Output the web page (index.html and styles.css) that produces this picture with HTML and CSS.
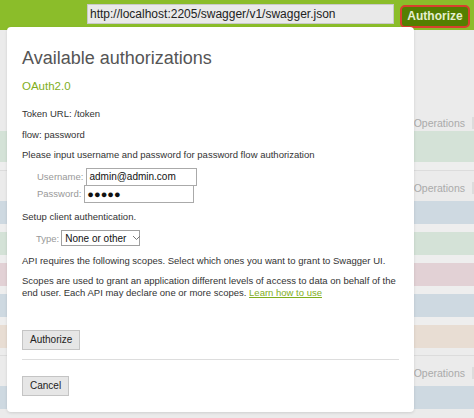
FILE: index.html
```html
<!DOCTYPE html>
<html>
<head>
<meta charset="utf-8">
<link rel="stylesheet" href="styles.css">
</head>
<body>
<div class="page">
  <header class="topbar">
    <div class="url">http://localhost:2205/swagger/v1/swagger.json</div>
    <div class="auth-top">Authorize</div>
  </header>
  <div class="bg">
    <div class="space s1"></div>
    <div class="oprow"><span class="ops">Operations</span><span class="opbox"></span></div>
    <div class="strip green h31"></div>
    <div class="space s2"></div>
    <div class="oprow tall"><span class="ops">Operations</span><span class="opbox"></span></div>
    <div class="strip blue"></div>
    <div class="gap"></div>
    <div class="strip green"></div>
    <div class="gap"></div>
    <div class="strip red"></div>
    <div class="gap"></div>
    <div class="strip blue"></div>
    <div class="gap"></div>
    <div class="strip tan"></div>
    <div class="space s3"></div>
    <div class="oprow tall"><span class="ops">Operations</span><span class="opbox"></span></div>
    <div class="strip blue"></div>
  </div>

  <div class="modal">
    <h1 class="title">Available authorizations</h1>
    <div class="scheme">OAuth2.0</div>
    <p class="line token">Token URL: /token</p>
    <p class="line flow">flow: password</p>
    <p class="line please">Please input username and password for password flow authorization</p>
    <div class="field first"><span class="lbl">Username:</span><span class="inp w111">admin@admin.com</span></div>
    <div class="field"><span class="lbl">Password:</span><span class="inp w110 dots">●●●●●</span></div>
    <p class="line setup">Setup client authentication.</p>
    <div class="field typerow"><span class="lbl">Type:</span><span class="sel"><span class="seltext">None or other</span><svg class="chev" width="9" height="6" viewBox="0 0 9 6"><path d="M1 1 L4.5 4.5 L8 1" fill="none" stroke="#777" stroke-width="1"/></svg></span></div>
    <p class="line api">API requires the following scopes. Select which ones you want to grant to Swagger UI.</p>
    <p class="line scopes">Scopes are used to grant an application different levels of access to data on behalf of the end user. Each API may declare one or more scopes. <span class="learn">Learn how to use</span></p>
    <div class="btnrow first"><span class="btn">Authorize</span></div>
    <div class="hr"></div>
    <div class="btnrow"><span class="btn">Cancel</span></div>
  </div>
</div>
</body>
</html>
```
FILE: styles.css
```css
* { box-sizing: border-box; }
html, body { margin: 0; padding: 0; }
body {
  width: 474px;
  height: 418px;
  overflow: hidden;
  font-family: "Liberation Sans", Arial, sans-serif;
  background: #ebebeb;
}
.page { position: relative; width: 474px; height: 418px; }

.topbar {
  height: 30px;
  background: #8bbd2a;
  display: flex;
  align-items: flex-start;
  padding-left: 87px;
}
.url {
  margin-top: 4px;
  width: 307px;
  height: 20px;
  background: #e9e9e9;
  border: 1px solid #c9c9c9;
  font-size: 12px;
  color: #222;
  line-height: 18px;
  padding-left: 2px;
}
.auth-top {
  margin-top: 5px;
  margin-left: 6px;
  width: 70px;
  height: 23px;
  border: 2px solid #d8402e;
  border-radius: 5px;
  background: #547f00;
  color: #e4efcf;
  font-weight: bold;
  font-size: 12px;
  line-height: 19px;
  text-align: center;
}

.bg { display: flex; flex-direction: column; }
.space { background: #ebebeb; }
.s1 { height: 85px; }
.s2 { height: 9px; background: #eeeeee; border-bottom: 1px solid #dcdcdc; }
.s3 { height: 8px; background: #ececec; border-bottom: 1px solid #dcdcdc; }
.oprow {
  height: 16px;
  display: flex;
  align-items: center;
  justify-content: flex-end;
  background: #ebebeb;
}
.oprow.tall { height: 30px; align-items: flex-end; padding-bottom: 7px; }
.ops {
  font-size: 10.5px;
  color: #aaaaaa;
  margin-right: 7px;
}
.opbox {
  width: 2px;
  height: 12px;
  background: #dcdcdc;
}
.strip { height: 23px; }
.h31 { height: 31px; }
.gap { height: 8px; background: #eeeeee; }
.green { background: #d4e2d7; }
.blue { background: #ced9e1; }
.red { background: #e2d1d5; }
.tan { background: #e8ddd3; }

.modal {
  position: absolute;
  left: 7px;
  top: 27px;
  width: 407px;
  height: 385px;
  background: #ffffff;
  border-radius: 4px;
  box-shadow: 0 1px 3px rgba(0,0,0,0.12);
  padding: 20px 15px 0 15px;
  color: #333;
  font-size: 9.5px;
}
.title {
  margin: 0;
  font-weight: normal;
  font-size: 18px;
  color: #555;
  line-height: 22px;
}
.scheme {
  margin-top: 10px;
  color: #7fae1c;
  font-size: 11.5px;
  line-height: 14px;
}
.line { margin: 0; line-height: 12px; }
.line.token { margin-top: 15px; }
.line.flow { margin-top: 9px; }
.line.please { margin-top: 8px; }
.field {
  padding-left: 15px;
  height: 17px;
  display: flex;
  align-items: center;
}
.field.first { margin-top: 7px; }
.lbl { color: #999; font-size: 9.5px; }
.inp {
  display: inline-block;
  margin-left: 3px;
  height: 18px;
  border: 1px solid #aaa;
  font-size: 10px;
  color: #111;
  line-height: 16px;
  padding-left: 2px;
  background: #fff;
}
.w111 { width: 111px; }
.w110 { width: 110px; }
.dots { font-size: 11px; letter-spacing: 0; }
.line.setup { margin-top: 9px; }
.typerow { margin-top: 7px; height: 16px; padding-left: 14px; }
.sel {
  display: inline-flex;
  align-items: center;
  margin-left: 2px;
  height: 16px;
  width: 79px;
  border: 1px solid #a0a0a0;
  font-size: 10px;
  color: #111;
  padding: 0 0 0 3px;
  background: #fff;
  white-space: nowrap;
}
.seltext { flex: none; }
.chev { flex: none; margin-left: 6px; }
.line.api { margin-top: 9px; }
.line.scopes { margin-top: 8px; line-height: 12px; }
.learn { color: #7fae1c; text-decoration: underline; }
.btnrow { display: flex; }
.btnrow.first { margin-top: 31px; }
.btn {
  display: inline-block;
  height: 20px;
  padding: 0 7px;
  background: #e6e6e6;
  border: 1px solid #c4c4c4;
  font-size: 10px;
  line-height: 18px;
  color: #222;
}
.hr {
  margin-top: 9px;
  margin-bottom: 16px;
  width: 377px;
  height: 1px;
  background: #dddddd;
}
```
